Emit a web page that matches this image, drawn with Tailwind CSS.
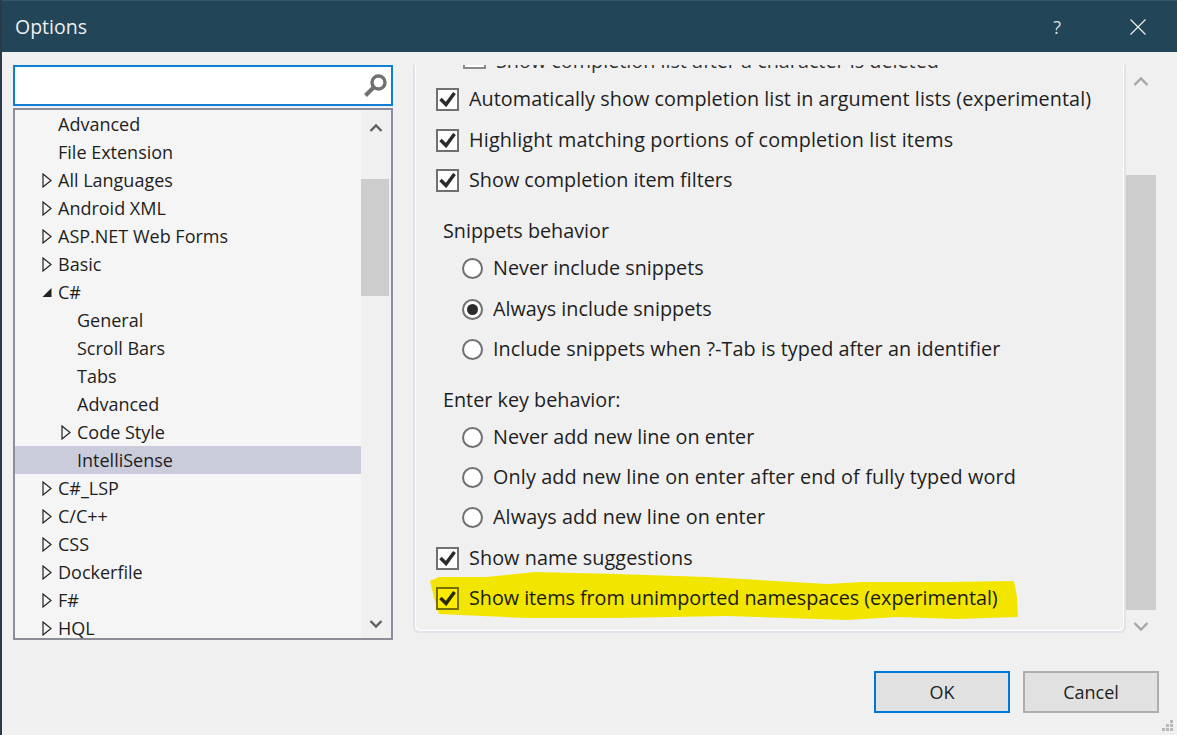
<!DOCTYPE html>
<html lang="en">
<head>
  <meta charset="UTF-8">
  <meta name="viewport" content="width=device-width, initial-scale=1.0">
  <title>Options</title>
  <script src="https://cdn.jsdelivr.net/npm/@tailwindcss/browser@4"></script>
</head>
<body class="w-[1177px] h-[735px] overflow-hidden bg-[#f0f0f0] font-['Open_Sans',sans-serif] text-[18px] text-[#1e1e1e]">
  <div class="flex flex-col h-[735px] border-l-2 border-[#2b3a4a]">
    <!-- title bar -->
    <div class="flex items-center h-[52px] shrink-0 bg-[#224557] border-t border-[#33566a] text-[#f0f0f0]">
      <span class="ml-[13px] text-[19.5px] leading-none">Options</span>
      <span class="ml-auto mr-[69px] text-[18px] text-[#d8dfe3] leading-none">?</span>
      <svg class="mr-[31px]" width="16" height="16" viewBox="0 0 16 16"><path d="M0.5 0.5 15.5 15.5M15.5 0.5 0.5 15.5" stroke="#f0f0f0" stroke-width="1.2" fill="none"/></svg>
    </div>

    <div class="relative flex flex-1 min-h-0 overflow-hidden">
      <!-- left column -->
      <div class="w-[380px] ml-[11px] mt-[13px] shrink-0 flex flex-col gap-[2px]">
        <div class="h-[41px] border-2 border-[#0f7fd6] bg-white flex items-center justify-end pr-[3px]">
          <svg width="26" height="26" viewBox="0 0 26 26"><circle cx="16.5" cy="9.5" r="6.5" fill="none" stroke="#707070" stroke-width="3.4"/><path d="M11.5 14.5 3.5 22.5" stroke="#707070" stroke-width="4" fill="none"/></svg>
        </div>
        <div class="relative h-[532px] border-2 border-[#8b8d98] bg-[#f5f5f5] overflow-hidden flex">
          <div class="w-[346px] shrink-0 leading-[28px]">
            <div class="h-[28px] pl-[43px]">Advanced</div>
            <div class="h-[28px] pl-[43px]">File Extension</div>
            <div class="h-[28px] flex items-center"><svg class="ml-[27px] mr-[6px]" width="10" height="15" viewBox="0 0 10 15"><path d="M1 1 9 7.5 1 14Z" fill="none" stroke="#222" stroke-width="1.2"/></svg>All Languages</div>
            <div class="h-[28px] flex items-center"><svg class="ml-[27px] mr-[6px]" width="10" height="15" viewBox="0 0 10 15"><path d="M1 1 9 7.5 1 14Z" fill="none" stroke="#222" stroke-width="1.2"/></svg>Android XML</div>
            <div class="h-[28px] flex items-center"><svg class="ml-[27px] mr-[6px]" width="10" height="15" viewBox="0 0 10 15"><path d="M1 1 9 7.5 1 14Z" fill="none" stroke="#222" stroke-width="1.2"/></svg>ASP.NET Web Forms</div>
            <div class="h-[28px] flex items-center"><svg class="ml-[27px] mr-[6px]" width="10" height="15" viewBox="0 0 10 15"><path d="M1 1 9 7.5 1 14Z" fill="none" stroke="#222" stroke-width="1.2"/></svg>Basic</div>
            <div class="h-[28px] flex items-center"><svg class="ml-[27px] mr-[6px]" width="10" height="15" viewBox="0 0 10 15"><path d="M9.5 3 9.5 12 0.5 12Z" fill="#222"/></svg>C#</div>
            <div class="h-[28px] pl-[62px]">General</div>
            <div class="h-[28px] pl-[62px]">Scroll Bars</div>
            <div class="h-[28px] pl-[62px]">Tabs</div>
            <div class="h-[28px] pl-[62px]">Advanced</div>
            <div class="h-[28px] flex items-center"><svg class="ml-[46px] mr-[6px]" width="10" height="15" viewBox="0 0 10 15"><path d="M1 1 9 7.5 1 14Z" fill="none" stroke="#222" stroke-width="1.2"/></svg>Code Style</div>
            <div class="h-[28px] pl-[62px] bg-[#cbccdb]">IntelliSense</div>
            <div class="h-[28px] flex items-center"><svg class="ml-[27px] mr-[6px]" width="10" height="15" viewBox="0 0 10 15"><path d="M1 1 9 7.5 1 14Z" fill="none" stroke="#222" stroke-width="1.2"/></svg>C#_LSP</div>
            <div class="h-[28px] flex items-center"><svg class="ml-[27px] mr-[6px]" width="10" height="15" viewBox="0 0 10 15"><path d="M1 1 9 7.5 1 14Z" fill="none" stroke="#222" stroke-width="1.2"/></svg>C/C++</div>
            <div class="h-[28px] flex items-center"><svg class="ml-[27px] mr-[6px]" width="10" height="15" viewBox="0 0 10 15"><path d="M1 1 9 7.5 1 14Z" fill="none" stroke="#222" stroke-width="1.2"/></svg>CSS</div>
            <div class="h-[28px] flex items-center"><svg class="ml-[27px] mr-[6px]" width="10" height="15" viewBox="0 0 10 15"><path d="M1 1 9 7.5 1 14Z" fill="none" stroke="#222" stroke-width="1.2"/></svg>Dockerfile</div>
            <div class="h-[28px] flex items-center"><svg class="ml-[27px] mr-[6px]" width="10" height="15" viewBox="0 0 10 15"><path d="M1 1 9 7.5 1 14Z" fill="none" stroke="#222" stroke-width="1.2"/></svg>F#</div>
            <div class="h-[28px] flex items-center"><svg class="ml-[27px] mr-[6px]" width="10" height="15" viewBox="0 0 10 15"><path d="M1 1 9 7.5 1 14Z" fill="none" stroke="#222" stroke-width="1.2"/></svg>HQL</div>
          </div>
          <!-- tree scrollbar -->
          <div class="flex-1 bg-[#f0f0f0] flex flex-col items-start">
            <svg class="mt-[13px] ml-[8px]" width="14" height="10" viewBox="0 0 14 10"><path d="M1.5 8 7 2.5 12.5 8" fill="none" stroke="#606060" stroke-width="2.4"/></svg>
            <div class="w-[28px] h-[117px] mt-[46px] bg-[#cdcdcd]"></div>
            <svg class="mt-auto mb-[9px] ml-[8px]" width="14" height="10" viewBox="0 0 14 10"><path d="M1.5 2 7 7.5 12.5 2" fill="none" stroke="#606060" stroke-width="2.4"/></svg>
          </div>
        </div>
      </div>

      <!-- right panel -->
      <div class="w-[713px] h-[568px] ml-[20px] mt-[13px] shrink-0 border-2 border-t-0 border-[#dde3e8] rounded-b-md text-[19.8px]">
        <div class="relative h-full overflow-hidden border border-t-0 border-white rounded-b-md">
          <svg class="absolute left-[11px] top-[506px]" width="592" height="52" viewBox="0 0 592 52"><path d="M3 10 12 6 60 6 108 1 190 3 280 6 400 13 435 11 520 11 587 10 590 26 591 46 530 48 470 46 420 49 300 45 190 47 100 47 12 43 8 30Z" fill="#f2e600"/></svg>
          <div class="relative flex flex-col">
            <div class="h-[40px] mt-[-27px] flex items-center pl-[47px] gap-[10px] text-[#333]">
              <span class="w-[23px] h-[23px] border-2 border-[#8a8a8a] bg-white -translate-y-[1px]"></span><span class="translate-y-[3px]">Show completion list after a character is deleted</span>
            </div>
            <div class="h-[40px] mt-[1px] flex items-center pl-[20px] gap-[10px] tracking-[0.06px]">
              <span class="w-[23px] h-[23px] border-2 border-[#707070] bg-white flex items-center justify-center"><svg width="17" height="15" viewBox="0 0 17 15"><path d="M1.5 7 7 12.5 15.5 1" fill="none" stroke="#2b2b2b" stroke-width="3.5"/></svg></span>Automatically show completion list in argument lists (experimental)
            </div>
            <div class="h-[40px] mt-[1px] flex items-center pl-[20px] gap-[10px] tracking-[0.15px]">
              <span class="w-[23px] h-[23px] border-2 border-[#707070] bg-white flex items-center justify-center"><svg width="17" height="15" viewBox="0 0 17 15"><path d="M1.5 7 7 12.5 15.5 1" fill="none" stroke="#2b2b2b" stroke-width="3.5"/></svg></span>Highlight matching portions of completion list items
            </div>
            <div class="h-[40px] flex items-center pl-[20px] gap-[10px]">
              <span class="w-[23px] h-[23px] border-2 border-[#707070] bg-white flex items-center justify-center"><svg width="17" height="15" viewBox="0 0 17 15"><path d="M1.5 7 7 12.5 15.5 1" fill="none" stroke="#2b2b2b" stroke-width="3.5"/></svg></span>Show completion item filters
            </div>
            <div class="h-[28px] mt-[17px] flex items-center pl-[27px]">Snippets behavior</div>
            <div class="h-[40px] mt-[3px] flex items-center pl-[46px] gap-[10px]">
              <span class="w-[21px] h-[21px] rounded-full border-2 border-[#707070] bg-white"></span>Never include snippets
            </div>
            <div class="h-[40px] mt-[1px] flex items-center pl-[46px] gap-[10px]">
              <span class="w-[21px] h-[21px] rounded-full border-2 border-[#707070] bg-white flex items-center justify-center"><span class="w-[11px] h-[11px] rounded-full bg-[#2b2b2b]"></span></span>Always include snippets
            </div>
            <div class="h-[40px] flex items-center pl-[46px] gap-[10px] tracking-[0.07px]">
              <span class="w-[21px] h-[21px] rounded-full border-2 border-[#707070] bg-white"></span>Include snippets when ?-Tab is typed after an identifier
            </div>
            <div class="h-[28px] mt-[17px] flex items-center pl-[27px]">Enter key behavior:</div>
            <div class="h-[40px] mt-[3px] flex items-center pl-[46px] gap-[10px]">
              <span class="w-[21px] h-[21px] rounded-full border-2 border-[#707070] bg-white"></span>Never add new line on enter
            </div>
            <div class="h-[40px] flex items-center pl-[46px] gap-[10px] tracking-[0.13px]">
              <span class="w-[21px] h-[21px] rounded-full border-2 border-[#707070] bg-white"></span>Only add new line on enter after end of fully typed word
            </div>
            <div class="h-[40px] flex items-center pl-[46px] gap-[10px] tracking-[0.1px]">
              <span class="w-[21px] h-[21px] rounded-full border-2 border-[#707070] bg-white"></span>Always add new line on enter
            </div>
            <div class="h-[40px] mt-[1px] flex items-center pl-[20px] gap-[10px] tracking-[0.08px]">
              <span class="w-[23px] h-[23px] border-2 border-[#707070] bg-white flex items-center justify-center"><svg width="17" height="15" viewBox="0 0 17 15"><path d="M1.5 7 7 12.5 15.5 1" fill="none" stroke="#2b2b2b" stroke-width="3.5"/></svg></span>Show name suggestions
            </div>
            <div class="h-[40px] flex items-center pl-[20px] gap-[10px] text-[#1a1a00] tracking-[-0.04px]">
              <span class="w-[23px] h-[23px] border-2 border-[#757000] bg-[#ffec00] flex items-center justify-center"><svg width="17" height="15" viewBox="0 0 17 15"><path d="M1.5 7 7 12.5 15.5 1" fill="none" stroke="#2b2b00" stroke-width="3.5"/></svg></span>Show items from unimported namespaces (experimental)
            </div>
          </div>
        </div>
      </div>

      <!-- right scrollbar -->
      <div class="w-[30px] h-[568px] mt-[13px] shrink-0 flex flex-col items-center">
        <svg class="mt-[11px]" width="16" height="11" viewBox="0 0 16 11"><path d="M1.5 9 8 2.5 14.5 9" fill="none" stroke="#a6a6a6" stroke-width="2.4"/></svg>
        <div class="w-[30px] h-[435px] mt-[88px] bg-[#cdcdcd]"></div>
        <svg class="mt-[11px]" width="16" height="11" viewBox="0 0 16 11"><path d="M1.5 2 8 8.5 14.5 2" fill="none" stroke="#a6a6a6" stroke-width="2.4"/></svg>
      </div>

      <!-- resize grip -->
      <svg class="absolute right-[3px] bottom-[3px]" width="12" height="12" viewBox="0 0 12 12" fill="#b8b8b8"><rect x="8" y="0" width="3" height="3"/><rect x="4" y="4" width="3" height="3"/><rect x="8" y="4" width="3" height="3"/><rect x="0" y="8" width="3" height="3"/><rect x="4" y="8" width="3" height="3"/><rect x="8" y="8" width="3" height="3"/></svg>
    </div>

    <!-- buttons -->
    <div class="absolute top-[671px] left-[874px] flex gap-[13px]">
      <button class="w-[136px] h-[42px] border-2 border-[#0078d7] bg-[#e1e1e1] text-[18px]">OK</button>
      <button class="w-[136px] h-[42px] border-2 border-[#adadad] bg-[#e1e1e1] text-[18px]">Cancel</button>
    </div>
  </div>
</body>
</html>
